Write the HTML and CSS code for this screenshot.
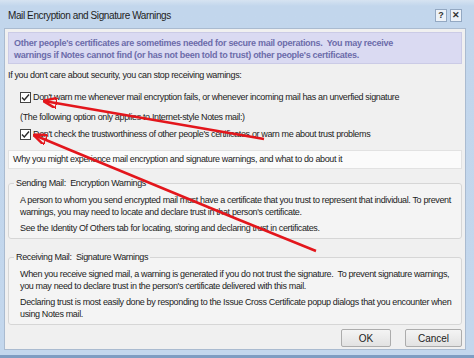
FILE: index.html
```html
<!DOCTYPE html>
<html lang="en">
  <head>
    <meta charset="UTF-8" />
    <title>Mail Encryption and Signature Warnings</title>
    <link rel="stylesheet" href="styles.css">
  </head>
  <body>
    <div class="window">
      <div class="titlebar">
        <span class="title">Mail Encryption and Signature Warnings</span>
        <div class="caption-btns">
          <span class="cbtn">?</span>
          <span class="cbtn">&#x2715;</span>
        </div>
      </div>

      <div class="client">
        <div class="info">
          Other people's certificates are sometimes needed for secure mail operations.&nbsp; You may receive<br>
          warnings if Notes cannot find (or has not been told to trust) other people's certificates.
        </div>

        <p class="lead">If you don't care about security, you can stop receiving warnings:</p>

        <label class="check">
          <span class="box"><svg width="11" height="11" viewBox="0 0 11 11"><polyline points="2,5.5 4.3,8 9,2.5" /></svg></span>
          Don't warn me whenever mail encryption fails, or whenever incoming mail has an unverfied signature
        </label>

        <p class="note">(The following option only applies to Internet-style Notes mail:)</p>

        <label class="check second">
          <span class="box"><svg width="11" height="11" viewBox="0 0 11 11"><polyline points="2,5.5 4.3,8 9,2.5" /></svg></span>
          Don't check the trustworthiness of other people's certificates or warn me about trust problems
        </label>

        <div class="why">Why you might experience mail encryption and signature warnings, and what to do about it</div>

        <fieldset class="group">
          <legend>Sending Mail:&nbsp; Encryption Warnings</legend>
          <p>A person to whom you send encrypted mail must have a certificate that you trust to represent that individual. To prevent<br>
            warnings, you may need to locate and declare trust in that person's certificate.</p>
          <p>See the Identity Of Others tab for locating, storing and declaring trust in certificates.</p>
        </fieldset>

        <fieldset class="group receiving">
          <legend>Receiving Mail:&nbsp; Signature Warnings</legend>
          <p>When you receive signed mail, a warning is generated if you do not trust the signature.&nbsp; To prevent signature warnings,<br>
            you may need to declare trust in the person's certificate delivered with this mail.</p>
          <p>Declaring trust is most easily done by responding to the Issue Cross Certificate popup dialogs that you encounter when<br>
            using Notes mail.</p>
        </fieldset>

        <div class="buttons">
          <button class="btn ok">OK</button>
          <button class="btn cancel">Cancel</button>
        </div>
      </div>

      <!-- red annotation arrows drawn over the dialog -->
      <svg class="arrows" width="474" height="358" viewBox="0 0 474 358">
        <defs>
          <marker id="head" markerUnits="userSpaceOnUse" markerWidth="14" markerHeight="11" refX="13" refY="5.5" orient="auto">
            <path d="M0 0 L14 5.5 L0 11 Z" fill="#e3161c" />
          </marker>
        </defs>
        <path d="M264 139 L44 101" marker-end="url(#head)" />
        <path d="M316 251 L237 219 L70 150 L34 135" marker-end="url(#head)" />
      </svg>
    </div>
  </body>
</html>
```

FILE: styles.css
```css
body {
  margin: 0;
  font-family: "Liberation Sans", Arial, sans-serif;
  font-size: 9px;
  letter-spacing: -0.36px;
  color: #1c1c1c;
  white-space: nowrap;
}
.window {
  position: relative;
  width: 474px;
  height: 358px;
  box-sizing: border-box;
  background: linear-gradient(#d6e3f1, #c2d6ec 6px, #c3d7ed);
  border-bottom: 3px solid #7e9dc2;
}
.titlebar {
  height: 28px;
  display: flex;
  align-items: center;
  justify-content: space-between;
  padding: 2px 12px 0 8px;
  box-sizing: border-box;
}
.title {
  font-size: 10px;
  letter-spacing: -0.4px;
  color: #1e1e1e;
}
.caption-btns {
  display: flex;
  gap: 3px;
}
.cbtn {
  width: 10px;
  height: 11px;
  line-height: 11px;
  text-align: center;
  font-size: 9px;
  font-weight: bold;
  letter-spacing: 0;
  color: #333;
  background: #edf2f8;
  border: 1px solid #93a8c2;
}
.client {
  margin: 0 8px 0 4px;
  height: 322px;
  box-sizing: border-box;
  background: #f0f0f0;
  border: 1px solid #aabbd0;
  padding: 3px 3px 0 3px;
}
.info {
  background: #dadaf2;
  border: 1px solid #cbcbe6;
  color: #6c6caa;
  font-weight: bold;
  font-size: 9px;
  letter-spacing: -0.28px;
  line-height: 12px;
  padding: 4px 5px 2px 5px;
}
p {
  margin: 0;
  line-height: 12px;
}
.lead {
  margin-top: 5px;
}
.check {
  display: flex;
  align-items: center;
  gap: 2px;
  line-height: 12px;
  margin-top: 10px;
  padding-left: 12px;
}
.check.second {
  margin-top: 5px;
}
.box {
  width: 11px;
  height: 11px;
  box-sizing: border-box;
  border: 1px solid #444;
  background: #fff;
  display: flex;
}
.box svg {
  margin: -1px;
}
.box polyline {
  fill: none;
  stroke: #2a2a2a;
  stroke-width: 1.4;
}
.note {
  margin-top: 8px;
  padding-left: 12px;
}
.why {
  margin-top: 10px;
  height: 19px;
  box-sizing: border-box;
  line-height: 17px;
  padding-left: 4px;
  background: #fbfbfb;
  border: 1px solid #e2e2e2;
}
.group {
  margin: 8px 0 0 0;
  padding: 0 6px 4px 5px;
  border: 1px solid #d6d6d6;
  border-radius: 3px;
  background: #f4f4f4;
}
.group.receiving {
  margin-top: 12px;
}
.group legend {
  padding: 0 2px;
  line-height: 12px;
}
.group p {
  margin-left: 6px;
  margin-top: 4px;
}
.group p:first-of-type {
  margin-top: 5px;
}
.buttons {
  display: flex;
  justify-content: flex-end;
  gap: 14px;
  margin-top: 4px;
}
.btn {
  height: 18px;
  padding: 0;
  font-family: inherit;
  font-size: 10px;
  letter-spacing: 0;
  color: #1c1c1c;
  background: linear-gradient(#f4f4f4, #e2e2e2);
  border: 1px solid #acacac;
  border-radius: 2px;
}
.ok {
  width: 50px;
}
.cancel {
  width: 57px;
}
.arrows {
  position: absolute;
  top: 0;
  left: 0;
  pointer-events: none;
}
.arrows path {
  fill: none;
  stroke: #e3161c;
  stroke-width: 2.5;
}
```
